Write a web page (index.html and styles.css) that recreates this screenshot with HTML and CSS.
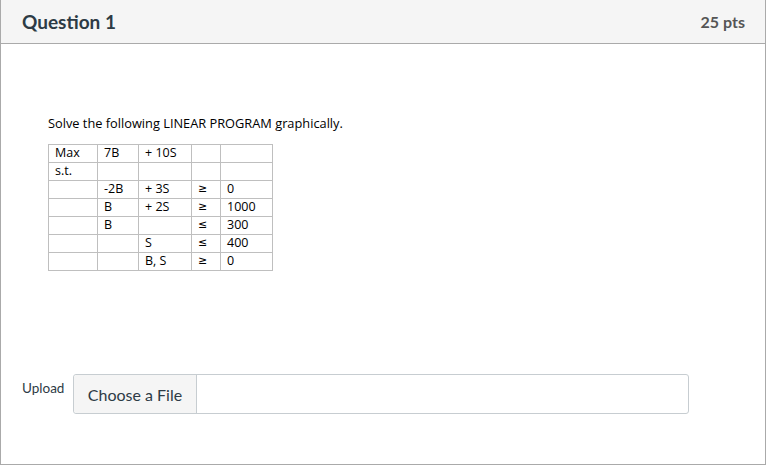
FILE: index.html
```html
<!DOCTYPE html>
<html>
<head>
<meta charset="utf-8">
<link rel="stylesheet" href="styles.css">
</head>
<body>
<div class="question">
  <div class="header">
    <h2 class="title">Question 1</h2>
    <div class="pts">25 pts</div>
  </div>
  <div class="content">
    <p class="prompt">Solve the following LINEAR PROGRAM graphically.</p>
    <table class="lp">
      <colgroup>
        <col class="c1"><col class="c2"><col class="c3"><col class="c4"><col class="c5">
      </colgroup>
      <tr><td>Max</td><td>7B</td><td>+ 10S</td><td></td><td></td></tr>
      <tr><td>s.t.</td><td></td><td></td><td></td><td></td></tr>
      <tr><td></td><td>-2B</td><td>+ 3S</td><td class="rel">≥</td><td>0</td></tr>
      <tr><td></td><td>B</td><td>+ 2S</td><td class="rel">≥</td><td>1000</td></tr>
      <tr><td></td><td>B</td><td></td><td class="rel">≤</td><td>300</td></tr>
      <tr><td></td><td></td><td>S</td><td class="rel">≤</td><td>400</td></tr>
      <tr><td></td><td></td><td>B, S</td><td class="rel">≥</td><td>0</td></tr>
    </table>
    <div class="upload">
      <span class="upload-label">Upload</span>
      <div class="file-input">
        <span class="file-btn">Choose a File</span>
      </div>
    </div>
  </div>
</div>
</body>
</html>
```
FILE: styles.css
```css
html, body {
  margin: 0;
  padding: 0;
  background: #fff;
}
body {
  font-family: Lato, "Liberation Sans", sans-serif;
  color: #2d3b45;
}
.question {
  width: 764px;
  height: 464px;
  border-left: 1px solid #aaaaaa;
  border-right: 1px solid #aaaaaa;
  border-bottom: 1px solid #aaaaaa;
  box-sizing: content-box;
}
.header {
  height: 43px;
  background: #f5f5f5;
  border-bottom: 1px solid #aaaaaa;
  display: flex;
  align-items: center;
  justify-content: space-between;
  padding: 0 20px 0 21px;
}
.title {
  margin: 0;
  font-size: 19px;
  font-weight: 700;
  color: #2d3b45;
}
.pts {
  font-size: 16px;
  font-weight: 700;
  color: #555555;
}
.content {
  padding: 71px 0 0 47px;
}
.prompt {
  margin: 0 0 12px 0;
  font-family: "Open Sans", "Liberation Sans", sans-serif;
  font-size: 12.8px;
  line-height: 17px;
  color: #000;
}
.lp {
  border-collapse: collapse;
  font-family: "Open Sans", "Liberation Sans", sans-serif;
  font-size: 12.5px;
  color: #000;
  table-layout: fixed;
  width: 225px;
}
.c1 { width: 49px; }
.c2 { width: 41px; }
.c3 { width: 53px; }
.c4 { width: 29px; }
.c5 { width: 52px; }
.lp td {
  border: 1px solid #bfbfbf;
  height: 17px;
  padding: 0 0 0 6px;
  line-height: 16px;
  vertical-align: top;
  white-space: nowrap;
}
.lp td.rel {
  font-family: "DejaVu Sans", sans-serif;
  font-size: 11px;
}
.upload {
  margin: 103px 0 0 -26px;
  display: flex;
  align-items: flex-start;
}
.upload-label {
  font-size: 13.5px;
  width: 51px;
  margin-top: 6px;
}
.file-input {
  width: 614px;
  height: 38px;
  border: 1px solid #c7cdd1;
  border-radius: 3px;
  display: flex;
}
.file-btn {
  display: flex;
  align-items: center;
  justify-content: center;
  width: 122px;
  background: #f5f5f5;
  border-right: 1px solid #c7cdd1;
  border-radius: 3px 0 0 3px;
  font-size: 16px;
  color: #2d3b45;
}
```
